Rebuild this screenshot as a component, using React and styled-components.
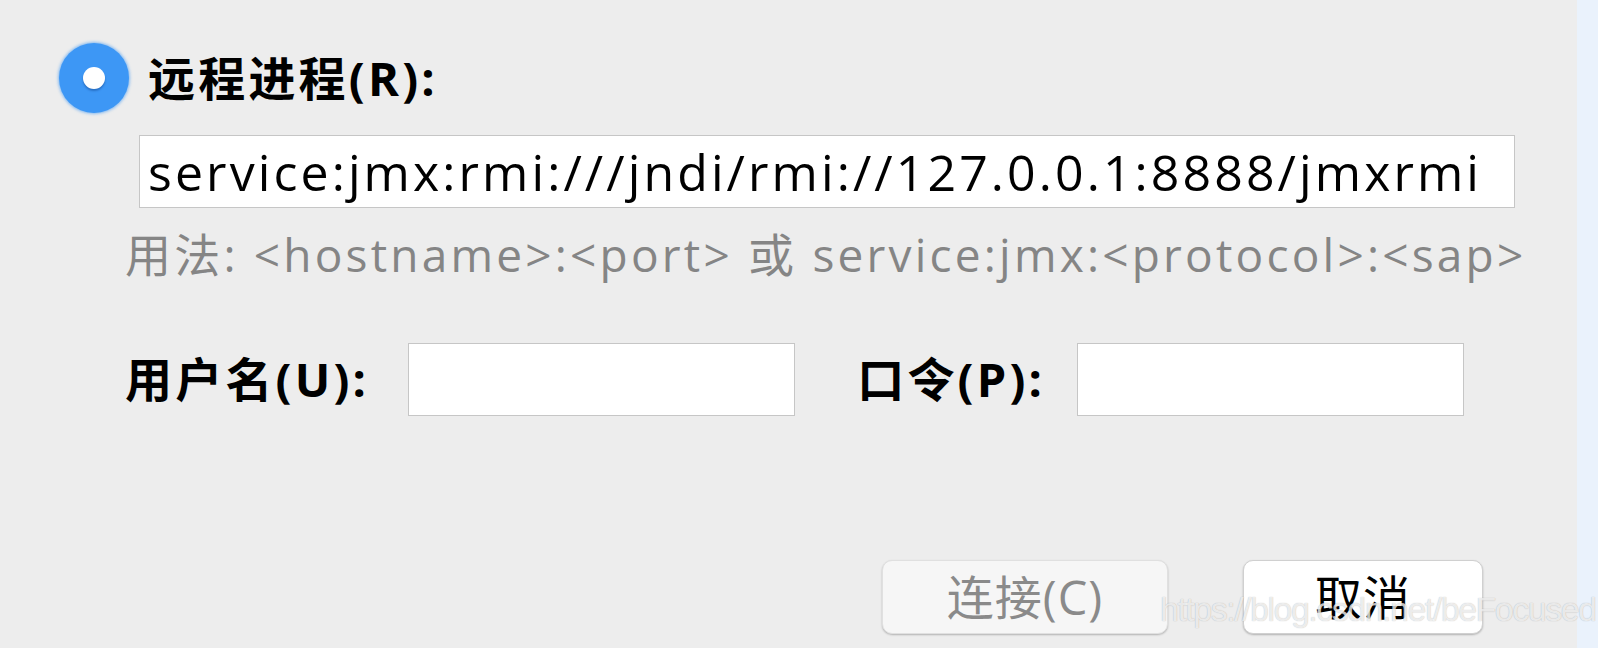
import React from 'react'
import styled, { createGlobalStyle } from 'styled-components'

const GlobalStyle = createGlobalStyle`
  html, body {
    margin: 0;
    padding: 0;
    background: #ededed;
  }
  body {
    font-family: "Open Sans", "Noto Sans CJK SC", sans-serif;
    color: #000;
  }
`

const Window = styled.div`
  display: flex;
  width: 1598px;
  height: 648px;
  overflow: hidden;
  position: relative;
`

const Dialog = styled.div`
  flex: 1;
  display: flex;
  flex-direction: column;
  padding: 43px 0 0 59px;
  background: #ededed;
`

const SideStrip = styled.div`
  width: 21px;
  background: #eaf2fc;
`

const RadioRow = styled.label`
  display: flex;
  align-items: center;
  gap: 19px;
`

const Radio = styled.span`
  width: 70px;
  height: 70px;
  border-radius: 50%;
  background: #3d97f5;
  box-shadow: 0 0 3px 1px rgba(61, 151, 245, 0.6);
  display: flex;
  align-items: center;
  justify-content: center;
  flex-shrink: 0;

  &::after {
    content: '';
    width: 22px;
    height: 22px;
    border-radius: 50%;
    background: #fff;
    box-shadow: 0 2px 2px rgba(0, 40, 110, 0.35);
  }
`

const Label = styled.span`
  font-family: "Open Sans", "Noto Sans CJK SC", sans-serif;
  font-weight: 700;
  font-size: 47px;
  letter-spacing: 3.2px;
  line-height: 1;
  white-space: nowrap;
  margin-left: ${p => p.$offset || 0}px;
`

const Body = styled.div`
  display: flex;
  flex-direction: column;
  padding-left: 66px;
`

const UrlField = styled.div`
  margin: 22px 0 0 14px;
  width: 1376px;
  height: 73px;
  box-sizing: border-box;
  border: 1.5px solid #c6c6c6;
  background: #fff;
  display: flex;
  align-items: center;
  padding-left: 8px;
  font-family: "Open Sans", sans-serif;
  font-size: 50px;
  letter-spacing: 3.1px;
  white-space: nowrap;
  overflow: hidden;
`

const Hint = styled.div`
  margin-top: 20px;
  color: #858585;
  font-family: "Open Sans", "Noto Sans CJK SC", sans-serif;
  font-size: 46px;
  letter-spacing: 3.2px;
  line-height: 52px;
  white-space: nowrap;
`

const CredRow = styled.div`
  display: flex;
  align-items: center;
  margin-top: 63px;
`

const Field = styled.div`
  width: 387px;
  height: 73px;
  box-sizing: border-box;
  border: 1.5px solid #c6c6c6;
  background: #fff;
  margin-left: ${p => p.$gap}px;
`

const ButtonRow = styled.div`
  display: flex;
  justify-content: flex-end;
  gap: 75px;
  margin-top: auto;
  padding: 0 94px 14px 0;
`

const Button = styled.button`
  width: ${p => p.$w}px;
  height: 74px;
  border-radius: 10px;
  border: 1px solid ${p => (p.$disabled ? '#e0e0e0' : '#d0d0d0')};
  background: ${p => (p.$disabled ? '#f6f6f6' : '#fff')};
  color: ${p => (p.$disabled ? '#8a8a8a' : '#000')};
  box-shadow: 0 1px 2px rgba(0, 0, 0, 0.25);
  font-family: "Open Sans", "Noto Sans CJK SC", sans-serif;
  font-size: 47px;
  letter-spacing: 1px;
  line-height: 1;
  padding: 0;
`

const Watermark = styled.div`
  position: absolute;
  left: 1160px;
  top: 590px;
  font-family: "Liberation Sans", Arial, sans-serif;
  font-size: 34px;
  letter-spacing: -1.5px;
  color: rgba(255, 255, 255, 0.75);
  text-shadow: 0 0 1px rgba(0, 0, 0, 0.3);
  white-space: nowrap;
  pointer-events: none;
`

export default function App() {
  return (
    <Window>
      <GlobalStyle />
      <Dialog>
        <RadioRow>
          <Radio />
          <Label>远程进程(R):</Label>
        </RadioRow>
        <Body>
          <UrlField>service:jmx:rmi:///jndi/rmi://127.0.0.1:8888/jmxrmi</UrlField>
          <Hint>用法: &lt;hostname&gt;:&lt;port&gt; 或 service:jmx:&lt;protocol&gt;:&lt;sap&gt;</Hint>
          <CredRow>
            <Label>用户名(U):</Label>
            <Field $gap={39} />
            <Label $offset={62}>口令(P):</Label>
            <Field $gap={32} />
          </CredRow>
        </Body>
        <ButtonRow>
          <Button $w={286} $disabled>连接(C)</Button>
          <Button $w={240}>取消</Button>
        </ButtonRow>
      </Dialog>
      <SideStrip />
      <Watermark>https://blog.csdn.net/beFocused</Watermark>
    </Window>
  )
}
